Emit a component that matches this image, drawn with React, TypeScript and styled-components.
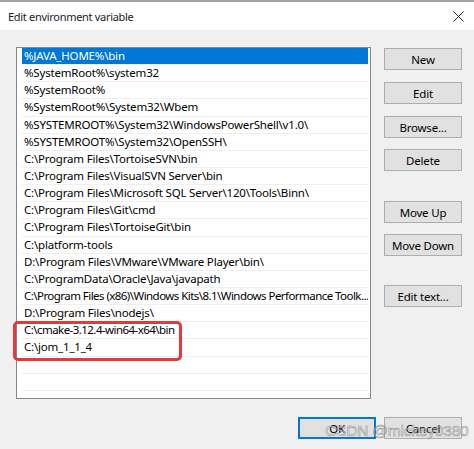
import styled, { createGlobalStyle } from "styled-components";

const GlobalStyle = createGlobalStyle`
    html, body {
        margin: 0;
        padding: 0;
        background: #f0f0f0;
    }
    * {
        box-sizing: border-box;
    }
`;

const font = `"Noto Sans", "Open Sans", "Liberation Sans", sans-serif`;

const Window = styled.div`
    position: relative;
    width: 474px;
    height: 449px;
    display: flex;
    flex-direction: column;
    background: #f0f0f0;
    font-family: ${font};
    font-size: 11.5px;
    letter-spacing: -0.2px;
    color: #000;
    overflow: hidden;
`;

const TitleBar = styled.div`
    height: 30px;
    display: flex;
    align-items: center;
    justify-content: space-between;
    background: #fff;
    border-top: 2px solid #a3a3a3;
    padding: 0 8px;
`;

const Title = styled.span`
    font-size: 11px;
    letter-spacing: -0.3px;
    color: #1a1a1a;
`;

const CloseIcon = styled.svg`
    width: 11px;
    height: 11px;
    margin-right: 2px;
`;

const Body = styled.div`
    display: flex;
    gap: 13px;
    padding: 17px 12px 0 16px;
`;

const List = styled.div`
    width: 355px;
    height: 352px;
    background: #fff;
    border: 1px solid #828790;
    padding: 0 2px 0 5px;
    overflow: hidden;
`;

const Row = styled.div<{ $selected?: boolean; $squeeze?: boolean }>`
    height: 17.15px;
    line-height: 16px;
    padding-left: 2px;
    white-space: nowrap;
    overflow: hidden;
    border-bottom: 1px solid #f0f0f0;
    letter-spacing: ${(p) => (p.$squeeze ? "-0.55px" : "-0.2px")};
    background: ${(p) => (p.$selected ? "#0078d7" : "transparent")};
    color: ${(p) => (p.$selected ? "#fff" : "#000")};
`;

const ButtonColumn = styled.div`
    display: flex;
    flex-direction: column;
    padding-top: 1px;
`;

const Button = styled.div<{ $top?: number; $default?: boolean }>`
    width: 78px;
    height: 22px;
    margin-top: ${(p) => p.$top ?? 0}px;
    display: flex;
    align-items: center;
    justify-content: center;
    background: #e1e1e1;
    border: ${(p) => (p.$default ? "2px solid #0078d7" : "1px solid #adadad")};
    color: #000;
`;

const Footer = styled.div`
    display: flex;
    justify-content: flex-end;
    gap: 8px;
    padding: 18px 12px 0 0;
`;

const Highlight = styled.div`
    position: absolute;
    left: 13px;
    top: 321px;
    width: 169px;
    height: 40px;
    border: 3px solid #e23a3c;
    border-radius: 5px;
`;

const Watermark = styled.div`
    position: absolute;
    left: 325px;
    top: 422px;
    font-family: "Liberation Sans", sans-serif;
    font-size: 15.5px;
    letter-spacing: -0.2px;
    color: rgba(255, 255, 255, 0.5);
    -webkit-text-stroke: 0.6px rgba(110, 110, 110, 0.7);
    white-space: nowrap;
`;

// squeeze: rows whose text runs tighter in the original
const entries: { text: string; squeeze?: boolean }[] = [
    { text: "%JAVA_HOME%\\bin" },
    { text: "%SystemRoot%\\system32" },
    { text: "%SystemRoot%" },
    { text: "%SystemRoot%\\System32\\Wbem" },
    { text: "%SYSTEMROOT%\\System32\\WindowsPowerShell\\v1.0\\" },
    { text: "%SYSTEMROOT%\\System32\\OpenSSH\\" },
    { text: "C:\\Program Files\\TortoiseSVN\\bin" },
    { text: "C:\\Program Files\\VisualSVN Server\\bin" },
    { text: "C:\\Program Files\\Microsoft SQL Server\\120\\Tools\\Binn\\" },
    { text: "C:\\Program Files\\Git\\cmd" },
    { text: "C:\\Program Files\\TortoiseGit\\bin" },
    { text: "C:\\platform-tools" },
    { text: "D:\\Program Files\\VMware\\VMware Player\\bin\\" },
    { text: "C:\\ProgramData\\Oracle\\Java\\javapath" },
    { text: "C:\\Program Files (x86)\\Windows Kits\\8.1\\Windows Performance Toolk...", squeeze: true },
    { text: "D:\\Program Files\\nodejs\\" },
    { text: "C:\\cmake-3.12.4-win64-x64\\bin", squeeze: true },
    { text: "C:\\jom_1_1_4" },
    { text: "" },
    { text: "" },
    { text: "" },
];

export default function App() {
    return (
        <Window>
            <GlobalStyle />
            <TitleBar>
                <Title>Edit environment variable</Title>
                <CloseIcon viewBox="0 0 11 11">
                    <path d="M0.5 0.5 L10.5 10.5 M10.5 0.5 L0.5 10.5" stroke="#222" strokeWidth="1" />
                </CloseIcon>
            </TitleBar>
            <Body>
                <List>
                    {entries.map((e, i) => (
                        <Row key={i} $selected={i === 0} $squeeze={e.squeeze}>{e.text}</Row>
                    ))}
                </List>
                <ButtonColumn>
                    <Button>New</Button>
                    <Button $top={12}>Edit</Button>
                    <Button $top={12}>Browse...</Button>
                    <Button $top={11}>Delete</Button>
                    <Button $top={30}>Move Up</Button>
                    <Button $top={11}>Move Down</Button>
                    <Button $top={29}>Edit text...</Button>
                </ButtonColumn>
            </Body>
            <Footer>
                <Button $default>OK</Button>
                <Button>Cancel</Button>
            </Footer>
            <Highlight />
            <Watermark>CSDN @mickey0380</Watermark>
        </Window>
    );
}
